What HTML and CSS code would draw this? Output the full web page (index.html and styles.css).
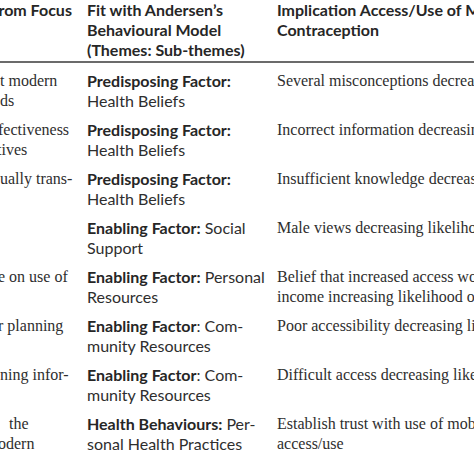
FILE: index.html
```html
<!DOCTYPE html>
<html lang="en">
<head>
<meta charset="utf-8">
<title>Table</title>
<link rel="stylesheet" href="styles.css">
</head>
<body>
<div class="table">
  <div class="row head">
    <div class="c1"><span class="cut1">From Focus</span></div>
    <div class="c2">Fit with Andersen’s<br>Behavioural Model<br>(Themes: Sub-themes)</div>
    <div class="c3">Implication Access/Use of Modern<br>Contraception</div>
  </div>
  <div class="rule"></div>
  <div class="row">
    <div class="c1">t modern<br>ds</div>
    <div class="c2"><b>Predisposing Factor:</b><br>Health Beliefs</div>
    <div class="c3">Several misconceptions decreasing likelihood of use</div>
  </div>
  <div class="row">
    <div class="c1"><span class="cut2">fectiveness</span><br><span class="cut3">tives</span></div>
    <div class="c2"><b>Predisposing Factor:</b><br>Health Beliefs</div>
    <div class="c3">Incorrect information decreasing likelihood of use</div>
  </div>
  <div class="row">
    <div class="c1">ually trans-</div>
    <div class="c2"><b>Predisposing Factor:</b><br>Health Beliefs</div>
    <div class="c3">Insufficient knowledge decreasing likelihood of use</div>
  </div>
  <div class="row">
    <div class="c1"></div>
    <div class="c2"><b>Enabling Factor:</b> Social<br>Support</div>
    <div class="c3">Male views decreasing likelihood of use</div>
  </div>
  <div class="row">
    <div class="c1"><span class="cut2">e on use of</span></div>
    <div class="c2"><b>Enabling Factor:</b> Personal<br>Resources</div>
    <div class="c3">Belief that increased access would reduce household<br>income increasing likelihood of use</div>
  </div>
  <div class="row">
    <div class="c1"><span class="cut2">r planning</span></div>
    <div class="c2"><b>Enabling Factor</b>: Com-<br>munity Resources</div>
    <div class="c3">Poor accessibility decreasing likelihood of use</div>
  </div>
  <div class="row">
    <div class="c1">ning infor-</div>
    <div class="c2"><b>Enabling Factor</b>: Com-<br>munity Resources</div>
    <div class="c3">Difficult access decreasing likelihood of use</div>
  </div>
  <div class="row">
    <div class="c1"><span class="ind">the</span><br><span class="cut2">odern</span></div>
    <div class="c2"><b>Health Behaviours:</b> Per-<br>sonal Health Practices</div>
    <div class="c3">Establish trust with use of mobile clinics for<br>access/use</div>
  </div>
</div>
</body>
</html>
```

FILE: styles.css
```css
html, body {
  margin: 0;
  padding: 0;
  background: #ffffff;
  overflow: hidden;
}

body {
  width: 474px;
  height: 474px;
  color: #2e2e2e;
  font-family: "Liberation Serif", "Times New Roman", serif;
  font-size: 16px;
  line-height: 20px;
}

.table {
  display: flex;
  flex-direction: column;
}

.row {
  display: grid;
  grid-template-columns: 77px 180px 300px;
  column-gap: 10px;
  padding: 8px 0 1px;
  white-space: nowrap;
}

.row.head {
  padding: 0;
  font-family: "Lato", "Liberation Sans", sans-serif;
  font-weight: 700;
  font-size: 16px;
  color: #262626;
}

.c1 {
  overflow: hidden;
}

.c2 {
  font-family: "Lato", "Liberation Sans", sans-serif;
  font-size: 16px;
}

.c2 b {
  font-weight: 700;
  color: #262626;
}

.head .c2 {
  font-weight: 700;
}

.rule {
  height: 2px;
  margin-top: 1px;
  background: #6b6b6b;
  width: 474px;
}

.cut1 { margin-left: -10px; display: inline-block; }
.cut2 { margin-left: -2px; display: inline-block; }
.cut3 { margin-left: -3px; display: inline-block; }
.ind { margin-left: 9px; display: inline-block; }
```
